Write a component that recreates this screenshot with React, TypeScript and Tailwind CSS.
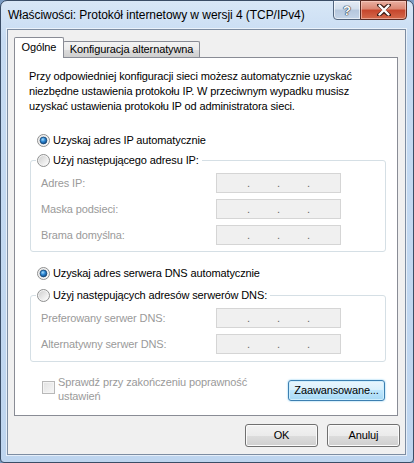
import React from "react";

const Radio = ({ checked }: { checked?: boolean }) => (
  <svg width="13" height="13" viewBox="0 0 13 13" className="shrink-0">
    <defs>
      <linearGradient id="rgray" x1="0" y1="0" x2="1" y2="1">
        <stop offset="0" stopColor="#cfcfcf" />
        <stop offset="1" stopColor="#fdfdfd" />
      </linearGradient>
      <radialGradient id="rblue" cx="0.4" cy="0.35" r="0.7">
        <stop offset="0" stopColor="#a8dcfb" />
        <stop offset="0.45" stopColor="#2f8ad6" />
        <stop offset="1" stopColor="#0b3f7a" />
      </radialGradient>
    </defs>
    <circle cx="6.5" cy="6.5" r="6" fill="#f4f4f4" stroke="#8e8f8f" />
    <circle cx="6.5" cy="6.5" r="4.6" fill="url(#rgray)" />
    {checked && (
      <circle cx="6.5" cy="6.5" r="3.4" fill="url(#rblue)" stroke="#1b4a78" strokeWidth="0.8" />
    )}
  </svg>
);

const IpBox = () => (
  <div className="w-[125px] h-[20px] border border-[#d5d5d5] bg-[#f0f0f0] flex items-center justify-center gap-[27px] leading-none text-[#6a6a6a]">
    <span>.</span>
    <span>.</span>
    <span>.</span>
  </div>
);

const Btn = ({ label, w, h, focus }: { label: string; w: string; h: string; focus?: boolean }) => (
  <div
    className={
      focus
        ? `${w} ${h} rounded-[3px] border border-[#3c7fb1] bg-[linear-gradient(to_bottom,#eaf6fd_0%,#d9f0fc_50%,#bee6fd_50%,#a7d9f5_100%)] shadow-[inset_0_0_0_1px_#cfeefd,0_0_2px_#6cc1f0] flex items-center justify-center text-black`
        : `${w} ${h} rounded-[3px] border border-[#707070] bg-[linear-gradient(to_bottom,#f2f2f2_0%,#ebebeb_50%,#dddddd_50%,#cfcfcf_100%)] shadow-[inset_0_0_0_1px_#fbfbfb] flex items-center justify-center text-black`
    }
  >
    {label}
  </div>
);

export default function App() {
  return (
    <div className="w-[414px] h-[463px] font-['Liberation_Sans',Arial,sans-serif] text-[11px] tracking-[-0.12px] text-black bg-[#7a9cc4]">
      <div className="w-[414px] h-[463px] flex flex-col rounded-t-[7px] rounded-b-[4px] border border-[#3a4d66] bg-[linear-gradient(to_bottom,#d8e7f7_0%,#c6dbf2_40px,#bed5ef_100%)]">
        {/* Title bar */}
        <div className="h-[28px] flex items-start">
          <div className="pl-[7px] pt-[7px] text-[12px] tracking-[-0.05px] leading-[15px] text-black">
            Właściwości: Protokół internetowy w wersji 4 (TCP/IPv4)
          </div>
          <div className="ml-auto mr-[6px] -mt-px flex h-[20px]">
            <div className="w-[28px] h-[20px] rounded-bl-[4px] border border-[#52657e] bg-[linear-gradient(to_bottom,#e4ecf6_0%,#d2deec_45%,#b5c7dd_50%,#c4d4e8_100%)] shadow-[inset_0_0_0_1px_rgba(255,255,255,0.6)] flex items-center justify-center">
              <span className="text-[13px] font-bold leading-none text-white [text-shadow:0_0_1px_#1e2c3e,0_0_1px_#1e2c3e,0_0_1px_#1e2c3e]">?</span>
            </div>
            <div className="w-[47px] h-[20px] -ml-px rounded-br-[4px] border border-[#5a2a22] bg-[linear-gradient(to_bottom,#eab0a2_0%,#db8672_45%,#c6452b_50%,#d46a4c_100%)] shadow-[inset_0_0_0_1px_rgba(255,220,210,0.5)] flex items-center justify-center">
              <svg width="14" height="12" viewBox="0 0 14 12">
                <path d="M2 1 L7 5 L12 1 M2 11 L7 7 L12 11 M7 5 L7 7" stroke="#3a1b14" strokeWidth="4" strokeLinecap="round" fill="none" />
                <path d="M2.5 1.5 L11.5 10.5 M11.5 1.5 L2.5 10.5" stroke="#ffffff" strokeWidth="2.4" strokeLinecap="round" fill="none" />
              </svg>
            </div>
          </div>
        </div>

        {/* Client area */}
        <div className="ml-[6px] w-[399px] h-[426px] border border-[#7d8da2] bg-[#f0f0f0] shadow-[0_0_0_1px_rgba(255,255,255,0.6)] flex flex-col pt-[7px] pl-[6px]">
          {/* Tabs */}
          <div className="flex items-end h-[20px]">
            <div className="relative z-10 w-[50px] h-[21px] -mb-px rounded-t-[2px] border border-b-0 border-[#898c95] bg-white flex items-center justify-center pb-[1px]">
              Ogólne
            </div>
            <div className="-ml-px w-[137px] h-[16px] rounded-t-[2px] border border-b-0 border-[#898c95] bg-[linear-gradient(to_bottom,#f3f3f3_0%,#ebebeb_50%,#dddddd_50%,#cfcfcf_100%)] flex items-center justify-center">
              Konfiguracja alternatywna
            </div>
          </div>

          {/* Panel */}
          <div className="w-[384px] h-[359px] border border-[#898c95] bg-white flex flex-col items-start">
            <p className="mt-[11px] ml-[14px] leading-[15px] whitespace-nowrap">
              Przy odpowiedniej konfiguracji sieci możesz automatycznie uzyskać
              <br />
              niezbędne ustawienia protokołu IP. W przeciwnym wypadku musisz
              <br />
              uzyskać ustawienia protokołu IP od administratora sieci.
            </p>

            <div className="mt-[19px] ml-[22px] h-[15px] flex items-center gap-[3px]">
              <Radio checked />
              <span>Uzyskaj adres IP automatycznie</span>
            </div>

            <fieldset className="mt-[5px] ml-[15px] w-[356px] border border-[#d5dfe5] rounded-[3px] p-0 pb-[6px] min-w-0">
              <legend className="ml-[5px] pl-px pr-[3px] h-[15px] flex items-center gap-[3px]">
                <Radio />
                <span>Użyj następującego adresu IP:</span>
              </legend>
              <div className="mt-[5px] pl-[10px] grid grid-cols-[175px_125px] gap-y-[6px] items-center text-[#9a9a9a]">
                <span>Adres IP:</span>
                <IpBox />
                <span>Maska podsieci:</span>
                <IpBox />
                <span>Brama domyślna:</span>
                <IpBox />
              </div>
            </fieldset>

            <div className="mt-[14px] ml-[22px] h-[15px] flex items-center gap-[3px]">
              <Radio checked />
              <span>Uzyskaj adres serwera DNS automatycznie</span>
            </div>

            <fieldset className="mt-[7px] ml-[15px] w-[356px] border border-[#d5dfe5] rounded-[3px] p-0 pb-[7px] min-w-0">
              <legend className="ml-[5px] pl-px pr-[3px] h-[15px] flex items-center gap-[3px]">
                <Radio />
                <span>Użyj następujących adresów serwerów DNS:</span>
              </legend>
              <div className="mt-[5px] pl-[10px] grid grid-cols-[175px_125px] gap-y-[6px] items-center text-[#9a9a9a]">
                <span>Preferowany serwer DNS:</span>
                <IpBox />
                <span>Alternatywny serwer DNS:</span>
                <IpBox />
              </div>
            </fieldset>

            <div className="mt-[13px] ml-[27px] w-[343px] flex items-start">
              <div className="mt-[6px] w-[13px] h-[13px] shrink-0 border border-[#b8b8b8] bg-[linear-gradient(135deg,#e2e2e2_0%,#f7f7f7_100%)] shadow-[inset_0_0_0_1px_#f4f4f4]" />
              <div className="ml-[3px] leading-[14px] text-[#9a9a9a] whitespace-nowrap">
                Sprawdź przy zakończeniu poprawność
                <br />
                ustawień
              </div>
              <div className="ml-auto mt-[5px]">
                <Btn label="Zaawansowane..." w="w-[97px]" h="h-[21px]" focus />
              </div>
            </div>
          </div>

          {/* Bottom buttons */}
          <div className="mt-[8px] pr-[5px] flex justify-end gap-[9px]">
            <Btn label="OK" w="w-[73px]" h="h-[23px]" />
            <Btn label="Anuluj" w="w-[73px]" h="h-[23px]" />
          </div>
        </div>
      </div>
    </div>
  );
}
